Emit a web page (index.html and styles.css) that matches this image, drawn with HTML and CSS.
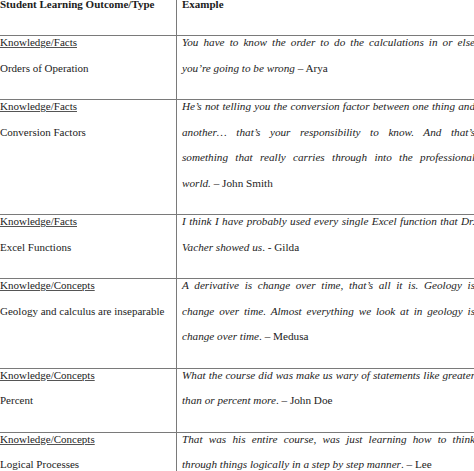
FILE: index.html
```html
<!DOCTYPE html>
<html>
<head>
<meta charset="utf-8">
<link rel="stylesheet" href="styles.css">
</head>
<body>
<div class="table">
  <div class="row head">
    <div class="cell left"><div class="txt">Student Learning Outcome/Type</div></div>
    <div class="cell right"><div class="txt">Example</div></div>
  </div>
  <div class="row">
    <div class="cell left"><div class="txt"><div class="type">Knowledge/Facts</div><div>Orders of Operation</div></div></div>
    <div class="cell right"><div class="txt quote"><i>You have to know the order to do the calculations in or else you’re going to be wrong</i> – Arya</div></div>
  </div>
  <div class="row">
    <div class="cell left"><div class="txt"><div class="type">Knowledge/Facts</div><div>Conversion Factors</div></div></div>
    <div class="cell right"><div class="txt quote"><i>He’s not telling you the conversion factor between one thing and another… that’s your responsibility to know. And that’s something that really carries through into the professional world.</i> – John Smith</div></div>
  </div>
  <div class="row">
    <div class="cell left"><div class="txt"><div class="type">Knowledge/Facts</div><div>Excel Functions</div></div></div>
    <div class="cell right"><div class="txt quote"><i>I think I have probably used every single Excel function that Dr. Vacher showed us</i>. - Gilda</div></div>
  </div>
  <div class="row">
    <div class="cell left"><div class="txt"><div class="type">Knowledge/Concepts</div><div>Geology and calculus are inseparable</div></div></div>
    <div class="cell right"><div class="txt quote"><i>A derivative is change over time, that’s all it is. Geology is change over time. Almost everything we look at in geology is change over time</i>. – Medusa</div></div>
  </div>
  <div class="row">
    <div class="cell left"><div class="txt"><div class="type">Knowledge/Concepts</div><div>Percent</div></div></div>
    <div class="cell right"><div class="txt quote"><i>What the course did was make us wary of statements like greater than or percent more</i>. – John Doe</div></div>
  </div>
  <div class="row">
    <div class="cell left"><div class="txt"><div class="type">Knowledge/Concepts</div><div>Logical Processes</div></div></div>
    <div class="cell right"><div class="txt quote"><i>That was his entire course, was just learning how to think through things logically in a step by step manner</i>. – Lee</div></div>
  </div>
</div>
</body>
</html>
```

FILE: styles.css
```css
html, body {
  margin: 0;
  padding: 0;
  background: #ffffff;
  overflow: hidden;
}
body {
  font-family: "Liberation Serif", "Times New Roman", serif;
  font-size: 11px;
  color: #1c1c1c;
}
.table {
  width: 475px;
  margin-top: -2.5px;
}
.row {
  display: grid;
  grid-template-columns: 177px 1fr;
  border-bottom: 1px solid #7a7a7a;
}
.cell {
  padding: 0 0 18px 0;
}
.left {
  border-right: 1px solid #7a7a7a;
}
.right {
  padding-left: 5px;
}
.txt {
  line-height: 25.5px;
  margin-top: -6px;
}
.head .txt {
  font-weight: bold;
}
.type {
  text-decoration: underline;
  text-decoration-color: #555;
  text-underline-offset: 1px;
}
.quote {
  text-align: justify;
  font-size: 11.2px;
}
```
